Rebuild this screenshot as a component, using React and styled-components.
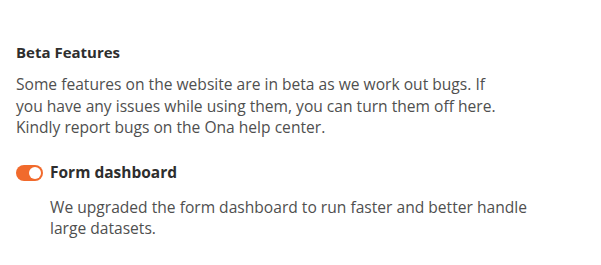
import styled, { createGlobalStyle } from 'styled-components'

const GlobalStyle = createGlobalStyle`
    body {
        margin: 0;
        background: #fff;
        font-family: "Open Sans", Lato, sans-serif;
        color: #4d4d4d;
    }
`

const Section = styled.section`
    width: 524px;
    padding: 42px 16px 0;
`

const Title = styled.h2`
    margin: 0 0 12px;
    font-size: 15px;
    line-height: 20px;
    font-weight: 700;
    color: #2e2e2e;
`

const Text = styled.p`
    margin: 0;
    font-size: 15.6px;
    line-height: 21.5px;
    color: #4f4f4f;
`

const Feature = styled.div`
    margin-top: 23px;
`

const FeatureHead = styled.label`
    display: flex;
    align-items: center;
    gap: 7px;
    height: 20px;
    cursor: pointer;
`

const Toggle = styled.span`
    position: relative;
    width: 27px;
    height: 16px;
    margin-top: 2px;
    border-radius: 8px;
    background: ${(p) => (p.on ? '#f16a2c' : '#ccc')};
    flex-shrink: 0;

    &::after {
        content: '';
        position: absolute;
        top: 2px;
        left: ${(p) => (p.on ? '13px' : '2px')};
        width: 12px;
        height: 12px;
        border-radius: 50%;
        background: #fff;
    }
`

const FeatureName = styled.span`
    font-size: 15.5px;
    line-height: 20px;
    font-weight: 700;
    color: #2e2e2e;
`

const FeatureText = styled(Text)`
    margin: 15px 0 0 34px;
`

const App = () => {
  return (
    <>
      <GlobalStyle />
      <Section>
        <Title>Beta Features</Title>
        <Text>
          Some features on the website are in beta as we work out bugs. If
          <br />
          you have any issues while using them, you can turn them off here.
          <br />
          Kindly report bugs on the Ona help center.
        </Text>
        <Feature>
          <FeatureHead>
            <Toggle on />
            <FeatureName>Form dashboard</FeatureName>
          </FeatureHead>
          <FeatureText>
            We upgraded the form dashboard to run faster and better handle
            large datasets.
          </FeatureText>
        </Feature>
      </Section>
    </>
  )
}

export default App
